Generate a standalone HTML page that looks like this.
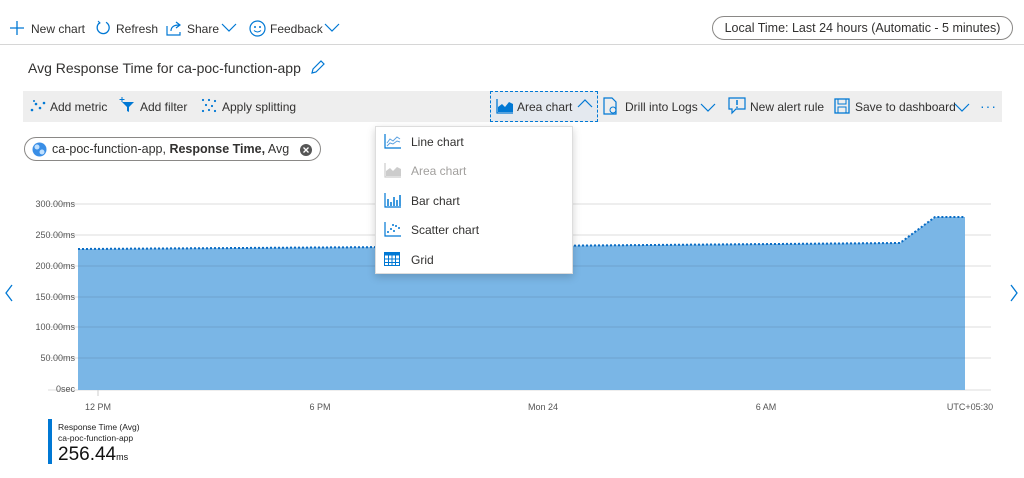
<!DOCTYPE html>
<html><head><meta charset="utf-8"><style>
*{box-sizing:border-box;margin:0;padding:0}
body{width:1024px;height:478px;overflow:hidden;background:#fff;font-family:"Liberation Sans",sans-serif;color:#323130;position:relative;font-size:12px}
.a{position:absolute;white-space:nowrap}
.blue{color:#0078d4}
svg{position:absolute}
</style></head><body>
<!-- top bar -->
<div class="a" style="left:0;top:44px;width:1024px;height:1px;background:#d6d6d6"></div>
<svg style="left:9px;top:20px" width="16" height="16"><path d="M8 1v14M1 8h14" stroke="#0078d4" stroke-width="1.3"/></svg>
<div class="a" style="left:31px;top:22px">New chart</div>
<svg style="left:95px;top:20px" width="16" height="16"><path d="M5 2.5A6 6 0 1 0 11 2.3" fill="none" stroke="#0078d4" stroke-width="1.3"/><path d="M3 1l2 2-2 1.5" fill="none" stroke="#0078d4"/></svg>
<div class="a" style="left:116px;top:22px">Refresh</div>
<svg style="left:166px;top:20px" width="17" height="16"><path d="M1 6v9h13v-3M5 11c0-4 3-6 8-6M10 2l4 3-4 3" fill="none" stroke="#0078d4" stroke-width="1.2"/></svg>
<div class="a" style="left:187px;top:22px">Share</div>
<svg style="left:221px;top:23px" width="16" height="10"><path d="M1 1l7 7 7-7" fill="none" stroke="#0078d4" stroke-width="1.2"/></svg>
<svg style="left:249px;top:20px" width="17" height="17"><circle cx="8.5" cy="8.5" r="7.5" fill="none" stroke="#0078d4" stroke-width="1.2"/><circle cx="6" cy="7" r="1" fill="#0078d4"/><circle cx="11" cy="7" r="1" fill="#0078d4"/><path d="M5 10.5q3.5 3 7 0" fill="none" stroke="#0078d4"/></svg>
<div class="a" style="left:270px;top:22px">Feedback</div>
<svg style="left:324px;top:23px" width="16" height="10"><path d="M1 1l7 7 7-7" fill="none" stroke="#0078d4" stroke-width="1.2"/></svg>
<div class="a" style="left:712px;top:16px;width:301px;height:24px;border:1px solid #8a8886;border-radius:12px;text-align:center;line-height:22px;font-size:12.5px">Local Time: Last 24 hours (Automatic - 5 minutes)</div>
<!-- title -->
<div class="a" style="left:28px;top:60px;font-size:14px">Avg Response Time for ca-poc-function-app</div>
<svg style="left:310px;top:59px" width="16" height="16"><path d="M2 14l1-4 8-8 3 3-8 8z" fill="none" stroke="#0078d4" stroke-width="1.2"/></svg>
<!-- toolbar -->
<div class="a" style="left:23px;top:91px;width:979px;height:31px;background:#eeeeee"></div>
<svg style="left:30px;top:99px" width="16" height="14"><g fill="#0078d4"><circle cx="2" cy="11" r="1.3"/><circle cx="6" cy="5" r="1.3"/><circle cx="10" cy="9" r="1.3"/><circle cx="14" cy="4" r="1.3"/><circle cx="4" cy="2" r="1"/></g></svg>
<div class="a" style="left:50px;top:100px">Add metric</div>
<svg style="left:119px;top:97px" width="16" height="16"><path d="M3 5h12l-5 5v5l-2-1v-4z" fill="#0078d4"/><path d="M3 0v5M0.5 2.5h5" stroke="#0078d4"/></svg>
<div class="a" style="left:140px;top:100px">Add filter</div>
<svg style="left:201px;top:98px" width="16" height="16"><g fill="#0078d4"><circle cx="2" cy="2" r="1.1"/><circle cx="8" cy="2" r="1.1"/><circle cx="14" cy="3" r="1.1"/><circle cx="5" cy="7" r="1.1"/><circle cx="11" cy="8" r="1.1"/><circle cx="2" cy="13" r="1.1"/><circle cx="8" cy="12" r="1.1"/><circle cx="14" cy="13" r="1.1"/></g></svg>
<div class="a" style="left:222px;top:100px">Apply splitting</div>
<div class="a" style="left:490px;top:91px;width:108px;height:31px;border:1px dashed #0078d4;background:#e4e9ef"></div>
<svg style="left:496px;top:98px" width="18" height="16"><path d="M1 1v14h16" fill="none" stroke="#0078d4" stroke-width="1.3"/><path d="M2 14V9l4-3 3 3 4-5 4 2v8z" fill="#0078d4"/></svg>
<div class="a" style="left:517px;top:100px">Area chart</div>
<svg style="left:577px;top:98px" width="16" height="10"><path d="M1 9l7-7 7 7" fill="none" stroke="#0078d4" stroke-width="1.2"/></svg>
<svg style="left:603px;top:97px" width="16" height="18"><path d="M1 1h8l4 4v12H1z" fill="none" stroke="#0078d4" stroke-width="1.2"/><circle cx="10" cy="13" r="3" fill="none" stroke="#0078d4"/></svg>
<div class="a" style="left:625px;top:100px">Drill into Logs</div>
<svg style="left:700px;top:103px" width="16" height="10"><path d="M1 1l7 7 7-7" fill="none" stroke="#0078d4" stroke-width="1.2"/></svg>
<svg style="left:728px;top:97px" width="18" height="18"><path d="M1 1h16v11h-9l-4 4v-4H1z" fill="none" stroke="#0078d4" stroke-width="1.2"/><path d="M9 3v5M9 9.5v1.5" stroke="#0078d4" stroke-width="1.5"/></svg>
<div class="a" style="left:750px;top:100px">New alert rule</div>
<svg style="left:834px;top:98px" width="16" height="16"><rect x="1" y="1" width="14" height="14" fill="none" stroke="#0078d4" stroke-width="1.3"/><rect x="4" y="1" width="8" height="5" fill="none" stroke="#0078d4"/><rect x="4" y="9" width="8" height="6" fill="none" stroke="#0078d4"/></svg>
<div class="a" style="left:855px;top:100px">Save to dashboard</div>
<svg style="left:954px;top:103px" width="16" height="10"><path d="M1 1l7 7 7-7" fill="none" stroke="#0078d4" stroke-width="1.2"/></svg>
<div class="a blue" style="left:980px;top:98px;font-size:14px;letter-spacing:1px">···</div>
<!-- pill -->
<div class="a" style="left:24px;top:137px;width:297px;height:24px;border:1px solid #8a8886;border-radius:12px"></div>
<svg style="left:32px;top:142px" width="15" height="15"><circle cx="7.5" cy="7.5" r="7" fill="#3a8ee6"/><circle cx="5" cy="5" r="2.5" fill="#bfe0ff"/><circle cx="10" cy="10" r="2.5" fill="#bfe0ff"/></svg>
<div class="a" style="left:52px;top:142px;font-size:12.5px">ca-poc-function-app, <b>Response Time,</b> Avg</div>
<svg style="left:300px;top:144px" width="12" height="12"><circle cx="6" cy="6" r="6" fill="#555"/><path d="M3.5 3.5l5 5M8.5 3.5l-5 5" stroke="#fff" stroke-width="1.3"/></svg>
<!-- chart -->
<svg style="left:0;top:190px" width="1024" height="230">
<g stroke="#ddd"><line x1="48" x2="991" y1="14" y2="14"/><line x1="48" x2="991" y1="45" y2="45"/><line x1="48" x2="991" y1="76" y2="76"/><line x1="48" x2="991" y1="107" y2="107"/><line x1="48" x2="991" y1="137" y2="137"/><line x1="48" x2="991" y1="168" y2="168"/><line x1="48" x2="991" y1="200" y2="200"/></g>
<path d="M78 59L400 57L900 53L935 27L965 27V200H78z" fill="#7ab6e6"/>
<g stroke="#6da2cf"><line x1="78" x2="965" y1="76" y2="76"/><line x1="78" x2="965" y1="107" y2="107"/><line x1="78" x2="965" y1="137" y2="137"/><line x1="78" x2="965" y1="168" y2="168"/></g>
<path d="M78 59L400 57L900 53L935 27L965 27" fill="none" stroke="#0a6cc4" stroke-width="2" stroke-dasharray="2 2"/>
<line x1="98" x2="98" y1="200" y2="206" stroke="#ccc"/>
<g font-size="9" fill="#555" text-anchor="end" font-family="Liberation Sans"><text x="75" y="17">300.00ms</text><text x="75" y="48">250.00ms</text><text x="75" y="79">200.00ms</text><text x="75" y="110">150.00ms</text><text x="75" y="140">100.00ms</text><text x="75" y="171">50.00ms</text><text x="75" y="202">0sec</text></g>
<g font-size="9" fill="#555" text-anchor="middle" font-family="Liberation Sans"><text x="98" y="220">12 PM</text><text x="320" y="220">6 PM</text><text x="543" y="220">Mon 24</text><text x="766" y="220">6 AM</text><text x="970" y="220">UTC+05:30</text></g>
<path d="M12 95l-6 8 6 8" fill="none" stroke="#0078d4" stroke-width="1.3"/>
<path d="M1011 95l6 8-6 8" fill="none" stroke="#0078d4" stroke-width="1.3"/>
</svg>
<!-- legend -->
<div class="a" style="left:48px;top:419px;width:4px;height:45px;background:#0078d4"></div>
<div class="a" style="left:58px;top:422px;font-size:8.5px;color:#222">Response Time (Avg)</div>
<div class="a" style="left:58px;top:433px;font-size:8.5px;color:#222">ca-poc-function-app</div>
<div class="a" style="left:58px;top:444px;font-size:19px;color:#111">256.44<span style="font-size:9px">ms</span></div>
<!-- menu -->
<div class="a" style="left:375px;top:126px;width:198px;height:148px;background:#fff;border:1px solid #ddd;box-shadow:0 3px 8px rgba(0,0,0,.18)"></div>
<svg style="left:384px;top:134px" width="17" height="15"><path d="M1 0v14h16" fill="none" stroke="#0078d4" stroke-width="1.2"/><path d="M3 9l3-4 3 2 4-4 3 2M3 12l3-3 3 1 4-3 3 1" fill="none" stroke="#5aa0e0"/></svg>
<div class="a" style="left:411px;top:135px">Line chart</div>
<svg style="left:384px;top:163px" width="17" height="15"><path d="M1 0v14h16" fill="none" stroke="#ccc" stroke-width="1.2"/><path d="M2 13V8l4-3 3 3 4-4 4 2v7z" fill="#ccc"/></svg>
<div class="a" style="left:411px;top:164px;color:#a19f9d">Area chart</div>
<svg style="left:384px;top:193px" width="17" height="15"><path d="M1 0v14h16" fill="none" stroke="#0078d4" stroke-width="1.2"/><path d="M4 13V6M7 13V9M10 13V4M13 13V7M16 13V2" stroke="#0078d4" stroke-width="1.5"/></svg>
<div class="a" style="left:411px;top:194px">Bar chart</div>
<svg style="left:384px;top:222px" width="17" height="15"><path d="M1 0v14h16" fill="none" stroke="#0078d4" stroke-width="1.2"/><g fill="#0078d4"><circle cx="4" cy="10" r="1"/><circle cx="7" cy="7" r="1"/><circle cx="10" cy="9" r="1"/><circle cx="12" cy="4" r="1"/><circle cx="15" cy="6" r="1"/><circle cx="9" cy="3" r="1"/></g></svg>
<div class="a" style="left:411px;top:223px">Scatter chart</div>
<svg style="left:384px;top:252px" width="16" height="14"><rect x="0.5" y="0.5" width="15" height="13" fill="none" stroke="#0078d4"/><rect x="0.5" y="0.5" width="15" height="3" fill="#0078d4"/><path d="M0 7h16M0 10.5h16M4.5 0v14M8 0v14M11.5 0v14" stroke="#0078d4"/></svg>
<div class="a" style="left:411px;top:253px">Grid</div>
</body></html>
